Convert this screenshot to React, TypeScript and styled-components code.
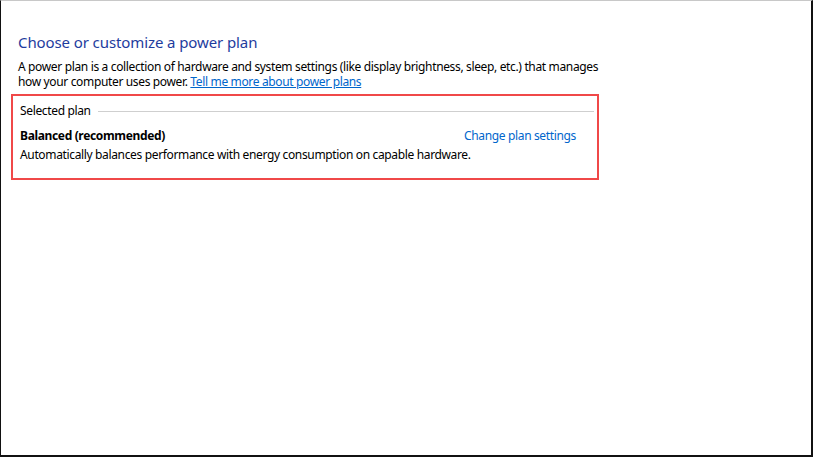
import React from "react";
import styled, { createGlobalStyle } from "styled-components";

const Global = createGlobalStyle`
  html, body { margin: 0; padding: 0; background: #fff; }
  body { font-family: "Noto Sans", "Segoe UI", sans-serif; }
`;

const Frame = styled.div`
  box-sizing: border-box;
  width: 813px;
  height: 457px;
  background: #fff;
  border-top: 1px solid #c8c8c8;
  border-left: 1px solid #111;
  border-right: 2px solid #111;
  border-bottom: 2px solid #111;
  padding: 31px 0 0 17px;
  color: #000;
  font-size: 12px;
  letter-spacing: -0.35px;
`;

const Title = styled.h1`
  margin: 0;
  font-weight: 400;
  font-size: 15px;
  line-height: 20px;
  letter-spacing: -0.1px;
  color: #1e3c9e;
`;

const Intro = styled.p`
  margin: 7px 0 0;
  width: 590px;
  line-height: 15px;
`;

const Link = styled.a`
  color: #0066cc;
  text-decoration: underline;
`;

const ActionLink = styled.span`
  color: #0066cc;
`;

const Highlight = styled.section`
  box-sizing: border-box;
  margin: 5px 0 0 -7px;
  width: 588px;
  height: 86px;
  border: 2px solid #f04848;
  padding: 7px 3px 0 7px;
`;

const GroupHeader = styled.div`
  display: flex;
  align-items: center;
  gap: 7px;
  line-height: 16px;
  &::after {
    content: "";
    flex: 1;
    height: 1px;
    background: #cfcfcf;
  }
`;

const PlanRow = styled.div`
  display: flex;
  justify-content: space-between;
  margin-top: 9px;
  padding-right: 18px;
  line-height: 16px;
`;

const PlanName = styled.span`
  font-weight: 700;
`;

const Desc = styled.div`
  line-height: 16px;
  margin-top: 3px;
`;

export default function App() {
  return (
    <>
      <Global />
      <Frame>
        <Title>Choose or customize a power plan</Title>
        <Intro>
          A power plan is a collection of hardware and system settings (like display brightness, sleep, etc.) that manages
          how your computer uses power. <Link href="#">Tell me more about power plans</Link>
        </Intro>
        <Highlight>
          <GroupHeader>Selected plan</GroupHeader>
          <PlanRow>
            <PlanName>Balanced (recommended)</PlanName>
            <ActionLink>Change plan settings</ActionLink>
          </PlanRow>
          <Desc>Automatically balances performance with energy consumption on capable hardware.</Desc>
        </Highlight>
      </Frame>
    </>
  );
}
